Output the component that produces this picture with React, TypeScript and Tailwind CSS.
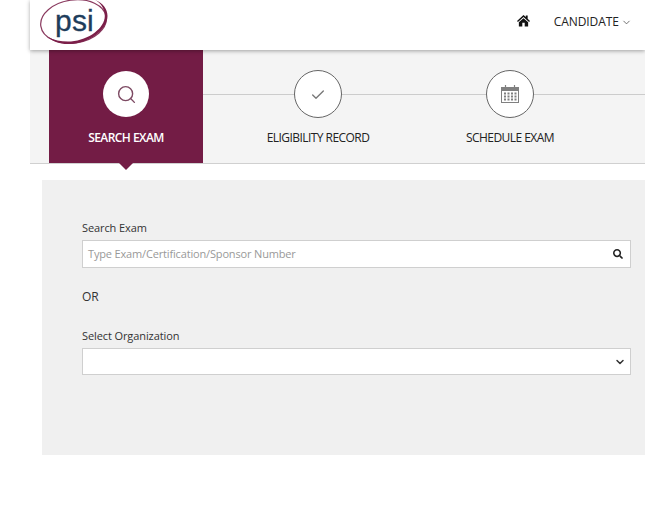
import { ChevronDown, Check, Search } from "lucide-react";
import { FaSearch } from "react-icons/fa";

const font = "font-['Open_Sans','Noto_Sans',sans-serif]";

function Logo() {
  return (
    <div className="relative mb-[4px] ml-[9px] h-[46px] w-[70px]">
      <svg viewBox="0 0 70 46" className="absolute inset-0 h-[46px] w-[70px]">
        <ellipse cx="34.500" cy="21.500" rx="33" ry="21.500" transform="rotate(-8 34.500 21.500)" fill="none" stroke="#8a3a5f" strokeWidth="1.200" />
        <path
          d="M 56 0 C 64 3 68.500 9 68.500 16 C 68.500 30 50 43.500 30 44 C 22 44.300 14 42 9 37 C 15 40.500 24 42 32 41.500 C 50 40 65.800 28 65.800 16 C 65.800 9 62 3 56 0 Z"
          fill="#7b1f49"
        />
      </svg>
      <span className="absolute left-[16px] top-[2px] text-[30px] font-normal leading-[38px] tracking-[0.2px] text-[#1e3d5c] [-webkit-text-stroke:0.3px_#1e3d5c] font-['Liberation_Sans',sans-serif]">
        psi
      </span>
    </div>
  );
}

function HomeIcon() {
  return (
    <svg viewBox="0 0 14 14" className="mb-[3px] h-[13px] w-[13px]" fill="#111111">
      <path d="M7 1 L0 7.500 L1 8.500 L7 3.200 L13 8.500 L14 7.500 L11.500 5.200 V1.500 H9.500 V3.300 Z" />
      <path d="M7 4.500 L2 8.900 V13.500 H5.700 V9.500 H8.300 V13.500 H12 V8.900 Z" />
    </svg>
  );
}

function CalendarIcon() {
  return (
    <svg viewBox="0 0 20 20" className="h-[20px] w-[20px]" fill="none" stroke="#808080">
      <rect x="1.500" y="3.500" width="17" height="15" strokeWidth="1" />
      <rect x="1.500" y="3.500" width="17" height="3" fill="#808080" strokeWidth="1" />
      <path d="M5.500 1v3M14.500 1v3" strokeWidth="1.200" />
      <path
        d="M4 9.500h2M7.500 9.500h2M11 9.500h2M14.500 9.500h2M4 12.500h2M7.500 12.500h2M11 12.500h2M14.500 12.500h2M4 15.500h2M7.500 15.500h2M11 15.500h2M14.500 15.500h2"
        strokeWidth="1.800"
      />
    </svg>
  );
}

export default function App() {
  return (
    <div className={`${font} h-[510px] w-[645px] overflow-hidden bg-white pl-[30px] text-[#333333]`}>
      {/* Header */}
      <header className="relative z-10 flex h-[50px] items-center justify-between bg-white pr-[13px] shadow-[0_1px_4px_rgba(0,0,0,0.35)]">
        <Logo />
        <div className="mb-[6px] flex items-center">
          <HomeIcon />
          <span className="ml-[24px] text-[12px] tracking-[-0.05px] text-[#222222]">CANDIDATE</span>
          <ChevronDown className="ml-[2px] h-[11px] w-[11px] text-[#555555]" strokeWidth={1.8} />
        </div>
      </header>

      {/* Steps */}
      <div className="relative flex h-[114px] border-b border-[#d0d0d0] bg-[#f4f4f4]">
        <div className="absolute left-[173px] right-0 top-[44px] h-px bg-[#cccccc]" />
        <div className="relative flex w-[192px] justify-center">
          <div className="flex h-[113px] w-[154px] flex-col items-center bg-[#731c45] pt-[21px]">
            <div className="flex h-[46px] w-[46px] items-center justify-center rounded-full bg-white">
              <Search className="h-[21px] w-[21px] text-[#7d4a63]" strokeWidth={1.6} />
            </div>
            <span className="mt-[13px] text-[12px] font-semibold leading-[16px] tracking-[-0.55px] text-white">SEARCH EXAM</span>
          </div>
          <div className="absolute left-1/2 top-[113px] h-0 w-0 -translate-x-1/2 border-x-[7px] border-t-[7px] border-x-transparent border-t-[#731c45]" />
        </div>
        <div className="relative flex w-[192px] flex-col items-center pt-[20px]">
          <div className="flex h-[48px] w-[48px] items-center justify-center rounded-full border border-[#666666] bg-white">
            <Check className="mt-[2px] h-[16px] w-[16px] text-[#777777]" strokeWidth={2} />
          </div>
          <span className="mt-[12px] text-[12px] leading-[16px] tracking-[-0.55px] text-[#222222]">ELIGIBILITY RECORD</span>
        </div>
        <div className="relative flex w-[192px] flex-col items-center pt-[20px]">
          <div className="flex h-[48px] w-[48px] items-center justify-center rounded-full border border-[#666666] bg-white">
            <CalendarIcon />
          </div>
          <span className="mt-[12px] text-[12px] leading-[16px] tracking-[-0.55px] text-[#222222]">SCHEDULE EXAM</span>
        </div>
      </div>

      {/* Form panel */}
      <main className="ml-[12px] mt-[16px] h-[275px] bg-[#f0f0f0] pl-[40px] pr-[14px] pt-[40px]">
        <label className="block text-[11px] leading-[16px] tracking-[-0.1px] text-[#333333]">Search Exam</label>
        <div className="mt-[4px] flex h-[28px] items-center justify-between border border-[#cfcfcf] bg-white pl-[5px] pr-[7px]">
          <span className="text-[11px] tracking-[-0.16px] text-[#999999]">Type Exam/Certification/Sponsor Number</span>
          <FaSearch className="h-[10px] w-[10px] text-[#222222]" />
        </div>
        <p className="mt-[21px] text-[12px] leading-[16px] text-[#333333]">OR</p>
        <label className="mt-[23px] block text-[11px] leading-[16px] tracking-[-0.1px] text-[#333333]">Select Organization</label>
        <div className="mt-[4px] flex h-[27px] items-center justify-end border border-[#cfcfcf] bg-white pr-[4px]">
          <ChevronDown className="h-[12px] w-[12px] text-[#333333]" strokeWidth={3} />
        </div>
      </main>
    </div>
  );
}
